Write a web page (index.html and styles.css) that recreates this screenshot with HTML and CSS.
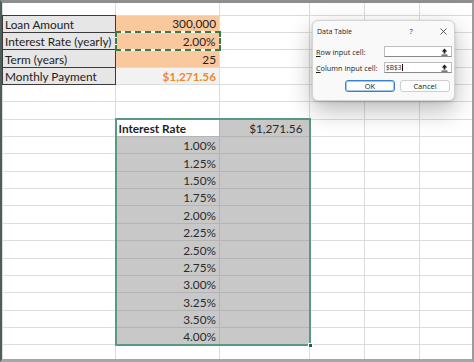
FILE: index.html
```html
<!DOCTYPE html>
<html lang="en">
<head>
    <meta charset="UTF-8">
    <meta name="viewport" content="width=device-width, initial-scale=1.0">
    <title>Data Table</title>
    <link rel="stylesheet" href="styles.css">
</head>
<body>
    <div class="window">
        <table class="sheet">
            <colgroup>
                <col class="col-a"><col class="col-b"><col class="col-c">
                <col class="col-d"><col class="col-e"><col class="col-f">
            </colgroup>
            <tr class="row-top"><td class="edge"></td><td></td><td></td><td></td><td></td><td></td></tr>
            <tr><td class="label">Loan Amount</td><td class="input num">300,000</td><td></td><td></td><td></td><td></td></tr>
            <tr><td class="label">Interest Rate (yearly)</td><td class="input num copied">2.00%</td><td></td><td></td><td></td><td></td></tr>
            <tr><td class="label">Term (years)</td><td class="input num">25</td><td></td><td></td><td></td><td></td></tr>
            <tr><td class="label">Monthly Payment</td><td class="result num">$1,271.56</td><td></td><td></td><td></td><td></td></tr>
            <tr><td></td><td></td><td></td><td></td><td></td><td></td></tr>
            <tr><td></td><td></td><td></td><td></td><td></td><td></td></tr>
            <tr><td></td><td class="sel sel-top sel-left head">Interest Rate</td><td class="sel sel-top sel-right num formula">$1,271.56</td><td></td><td></td><td></td></tr>
            <tr><td></td><td class="sel sel-left num">1.00%</td><td class="sel sel-right"></td><td></td><td></td><td></td></tr>
            <tr><td></td><td class="sel sel-left num">1.25%</td><td class="sel sel-right"></td><td></td><td></td><td></td></tr>
            <tr><td></td><td class="sel sel-left num">1.50%</td><td class="sel sel-right"></td><td></td><td></td><td></td></tr>
            <tr><td></td><td class="sel sel-left num">1.75%</td><td class="sel sel-right"></td><td></td><td></td><td></td></tr>
            <tr><td></td><td class="sel sel-left num">2.00%</td><td class="sel sel-right"></td><td></td><td></td><td></td></tr>
            <tr><td></td><td class="sel sel-left num">2.25%</td><td class="sel sel-right"></td><td></td><td></td><td></td></tr>
            <tr><td></td><td class="sel sel-left num">2.50%</td><td class="sel sel-right"></td><td></td><td></td><td></td></tr>
            <tr><td></td><td class="sel sel-left num">2.75%</td><td class="sel sel-right"></td><td></td><td></td><td></td></tr>
            <tr><td></td><td class="sel sel-left num">3.00%</td><td class="sel sel-right"></td><td></td><td></td><td></td></tr>
            <tr><td></td><td class="sel sel-left num">3.25%</td><td class="sel sel-right"></td><td></td><td></td><td></td></tr>
            <tr><td></td><td class="sel sel-left num">3.50%</td><td class="sel sel-right"></td><td></td><td></td><td></td></tr>
            <tr><td></td><td class="sel sel-left sel-bottom num">4.00%</td><td class="sel sel-right sel-bottom corner"><span class="fill-handle"></span></td><td></td><td></td><td></td></tr>
            <tr class="row-bottom"><td></td><td></td><td></td><td></td><td></td><td></td></tr>
        </table>

        <div class="dialog" role="dialog" aria-label="Data Table">
            <div class="dialog-title">
                <span class="title">Data Table</span>
                <span class="help">?</span>
                <span class="close">
                    <svg width="7" height="7" viewBox="0 0 7 7"><path d="M0.5 0.5 L6.5 6.5 M6.5 0.5 L0.5 6.5" stroke="#333" stroke-width="0.8" fill="none"/></svg>
                </span>
            </div>
            <div class="field">
                <label><u>R</u>ow input cell:</label>
                <div class="ref-box">
                    <span class="ref-text"></span>
                    <span class="ref-btn">
                        <svg width="7" height="8" viewBox="0 0 7 8"><path d="M3.5 0.5 L6.3 3.6 H4.5 V5.6 H2.5 V3.6 H0.7 Z" fill="#222"/><rect x="0.5" y="6.6" width="6" height="1" fill="#222"/></svg>
                    </span>
                </div>
            </div>
            <div class="field">
                <label><u>C</u>olumn input cell:</label>
                <div class="ref-box">
                    <span class="ref-text">$B$3<i class="caret"></i></span>
                    <span class="ref-btn">
                        <svg width="7" height="8" viewBox="0 0 7 8"><path d="M3.5 0.5 L6.3 3.6 H4.5 V5.6 H2.5 V3.6 H0.7 Z" fill="#222"/><rect x="0.5" y="6.6" width="6" height="1" fill="#222"/></svg>
                    </span>
                </div>
            </div>
            <div class="buttons">
                <button class="btn primary">OK</button>
                <button class="btn">Cancel</button>
            </div>
        </div>
    </div>
</body>
</html>
```

FILE: styles.css
```css
* {
  box-sizing: border-box;
}

body {
  margin: 0;
  background: #fff;
}

.window {
  position: relative;
  width: 474px;
  height: 362px;
  overflow: hidden;
  background: #fff;
  border-top: 3px solid #8e8e8e;
  border-left: 2px solid #4f5d58;
  border-right: 2px solid #9c9c9c;
  border-bottom: 3px solid #a6a6a6;
}

/* spreadsheet */
.sheet {
  table-layout: fixed;
  border-collapse: collapse;
  width: 470px;
  font-family: Lato, "Liberation Sans", sans-serif;
  font-size: 11.8px;
  color: #222;
}

.col-a { width: 113px; }
.col-b { width: 104px; }
.col-c { width: 90px; }
.col-d { width: 55px; }
.col-e { width: 55px; }
.col-f { width: 53px; }

.sheet td {
  height: 17.37px;
  padding: 0 3px 0 2px;
  border: 1px solid #dcdcdc;
  white-space: nowrap;
  overflow: hidden;
  vertical-align: bottom;
  line-height: 15px;
}

.sheet .row-top td {
  height: 12px;
  border-top: none;
}

.sheet .row-top td.edge {
  border-bottom-color: #3b3b3b;
}

.num {
  text-align: right;
}

.sheet td.label {
  background: #e6e6e6;
  border: 1px solid #3b3b3b;
  padding-right: 0;
}

.sheet td.input {
  background: #f9c89d;
}

.sheet td.copied {
  border: 2px dashed #3a7a44;
}

.sheet td.result {
  background: #f2f2f2;
  color: #ee8a2c;
  font-weight: 700;
}

/* selected what-if range */
.sheet td.sel {
  background: #c8c8c8;
  border-color: #b4b4b4;
  color: #2a2a2a;
}

.sheet td.head {
  background: #fff;
  font-weight: 700;
  color: #1f1f1f;
}

.sheet td.formula {
  padding-right: 6px;
}

.sheet td.sel-top { border-top: 2px solid #579a80; }
.sheet td.sel-left { border-left: 2px solid #579a80; }
.sheet td.sel-right { border-right: 2px solid #579a80; }
.sheet td.sel-bottom { border-bottom: 2px solid #579a80; }

.sheet td.corner {
  position: relative;
  overflow: visible;
}

.fill-handle {
  position: absolute;
  right: -4px;
  bottom: -4px;
  width: 5px;
  height: 5px;
  background: #2f5a49;
  border: 1px solid #fff;
}

.sheet .row-bottom td {
  height: 20px;
}

/* Data Table dialog */
.dialog {
  position: absolute;
  left: 310px;
  top: 17px;
  width: 143px;
  height: 81px;
  display: flex;
  flex-direction: column;
  padding: 0 2px 8px 3px;
  background: #f9f9f9;
  border: 1px solid #d4d4d4;
  border-radius: 6px;
  box-shadow: 0 9px 24px rgba(0, 0, 0, 0.28), 0 1px 3px rgba(0, 0, 0, 0.14);
  font-family: "Open Sans", "Noto Sans", sans-serif;
  font-size: 7.3px;
  color: #1b1b1b;
}

.dialog-title {
  display: flex;
  align-items: center;
  height: 20px;
}

.title {
  flex: 1;
  padding-left: 1px;
  font-size: 7px;
}

.help,
.close {
  width: 12px;
  text-align: center;
  display: flex;
  justify-content: center;
  align-items: center;
}

.help {
  margin-right: 20px;
  font-size: 7.5px;
}

.close {
  margin-right: 3px;
}

.field {
  display: flex;
  align-items: center;
  justify-content: space-between;
  height: 11px;
  margin-top: 5px;
}

.ref-box {
  display: flex;
  width: 68px;
  height: 11px;
  background: #fff;
  border: 1px solid #bdbdbd;
  border-bottom-color: #8a8a8a;
}

.ref-text {
  flex: 1;
  display: flex;
  align-items: center;
  padding-left: 1px;
  font-size: 6.5px;
}

.caret {
  display: inline-block;
  width: 1px;
  height: 7px;
  margin-left: 1px;
  background: #111;
}

.ref-btn {
  width: 14px;
  display: flex;
  align-items: center;
  justify-content: center;
}

.buttons {
  display: flex;
  justify-content: flex-end;
  gap: 5px;
  margin-top: 7px;
  padding-right: 2px;
}

.btn {
  width: 50px;
  height: 12px;
  padding: 0;
  font: inherit;
  font-size: 7.5px;
  color: #1b1b1b;
  background: #fdfdfd;
  border: 1px solid #cfcfcf;
  border-radius: 3px;
}

.btn.primary {
  border-color: #3a7fd0;
  box-shadow: inset 0 0 0 1px rgba(58, 127, 208, 0.45);
}
```
